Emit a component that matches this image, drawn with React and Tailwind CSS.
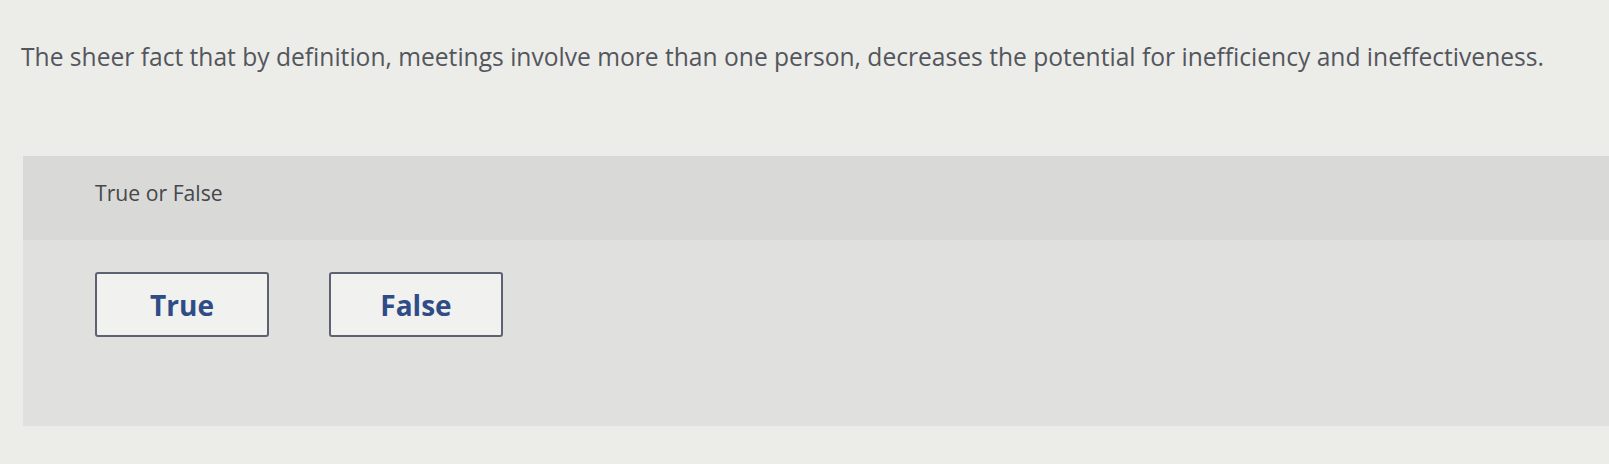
export default function App() {
  return (
    <div className="min-h-[464px] w-full overflow-hidden bg-[#ecece9]" style={{ fontFamily: '"Open Sans", Lato, sans-serif' }}>
      <p className="pl-[21px] pt-[41px] text-[24.6px] leading-[32px] text-[#53565c] whitespace-nowrap">
        The sheer fact that by definition, meetings involve more than one person, decreases the potential for inefficiency and ineffectiveness.
      </p>

      <section className="ml-[23px] mt-[83px] h-[270px] bg-[#e0e0de] flex flex-col">
        <div className="h-[84px] bg-[#d9d9d7] pl-[72px] pt-[22px]">
          <span className="text-[21.2px] leading-[30px] text-[#45474b]">True or False</span>
        </div>
        <div className="flex gap-[60px] pl-[72px] pt-[32px]">
          {['True', 'False'].map((label) => (
            <button
              key={label}
              className="w-[174px] h-[65px] rounded-[3px] border-2 border-[#5d6272] bg-[#f1f1ef] text-[28px] font-bold text-[#2f4c86]"
            >
              {label}
            </button>
          ))}
        </div>
      </section>
    </div>
  );
}
